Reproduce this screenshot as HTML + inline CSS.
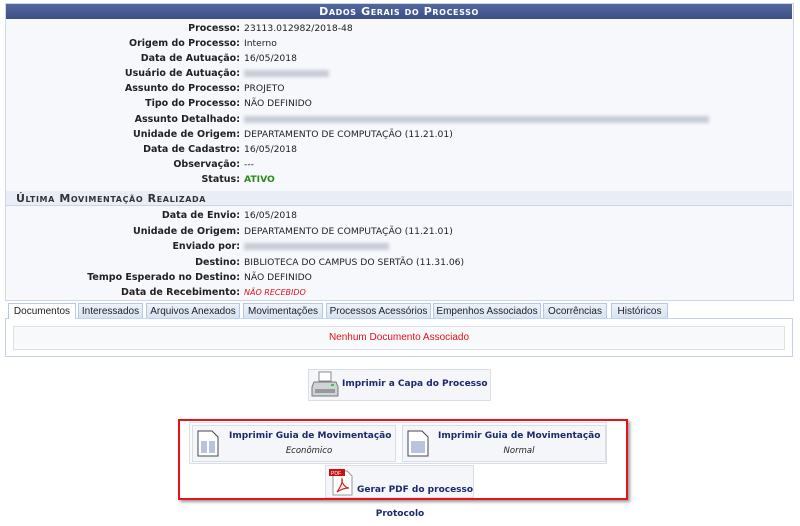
<!DOCTYPE html>
<html><head><meta charset="utf-8"><style>
body{margin:0;width:800px;height:526px;background:#fff;font-family:"DejaVu Sans","Liberation Sans",sans-serif;font-size:10px;color:#222;position:relative;overflow:hidden}
.a{position:absolute}
.box{left:5px;top:3px;width:787px;height:296px;background:#f7f8fc;border:1px solid #cfd6e4}
.hdr{left:6px;top:4px;width:786px;height:15px;background:linear-gradient(#5468a0,#3b4e86);color:#fff;font-weight:bold;font-size:11px;text-align:center;line-height:15px;font-variant:small-caps;letter-spacing:.6px}
.row{left:0;width:800px;height:15px;line-height:15px}
.l{position:absolute;right:560px;font-weight:bold;white-space:nowrap;font-size:9.5px}
.v{position:absolute;left:244px;white-space:nowrap;font-size:9.2px}
.blur{display:inline-block;height:7px;background:#c8ccd6;filter:blur(1.5px);vertical-align:middle}
.sec{left:6px;top:191px;width:786px;height:15px;background:#e9edf5;border-bottom:1px solid #cdd5e3;line-height:15px;font-weight:bold;font-size:11px;padding-left:10px;box-sizing:border-box;color:#333;letter-spacing:.6px;font-variant:small-caps}
.tab{position:absolute;top:303px;height:15px;background:linear-gradient(#eef3fb,#d6e2f5);border:1px solid #b7c8e6;border-bottom:none;font-family:"Liberation Sans",sans-serif;font-size:10px;line-height:15px;text-align:center;color:#222;box-sizing:border-box}
.btn{position:absolute;background:#f4f6fa;border:1px solid #d8dde6;box-sizing:border-box}
.bt{font-weight:bold;color:#1b2a6b;font-size:9px}
</style></head><body>
<div class="a box"></div>
<div class="a hdr">Dados Gerais do Processo</div>
<div class="a row" style="top:21px"><span class="l">Processo:</span><span class="v">23113.012982/2018-48</span></div>
<div class="a row" style="top:36px"><span class="l">Origem do Processo:</span><span class="v">Interno</span></div>
<div class="a row" style="top:51px"><span class="l">Data de Autuação:</span><span class="v">16/05/2018</span></div>
<div class="a row" style="top:66px"><span class="l">Usuário de Autuação:</span><span class="v"><span class="blur" style="width:85px"></span></span></div>
<div class="a row" style="top:81px"><span class="l">Assunto do Processo:</span><span class="v">PROJETO</span></div>
<div class="a row" style="top:96px"><span class="l">Tipo do Processo:</span><span class="v">NÃO DEFINIDO</span></div>
<div class="a row" style="top:112px"><span class="l">Assunto Detalhado:</span><span class="v"><span class="blur" style="width:465px"></span></span></div>
<div class="a row" style="top:127px"><span class="l">Unidade de Origem:</span><span class="v">DEPARTAMENTO DE COMPUTAÇÃO (11.21.01)</span></div>
<div class="a row" style="top:142px"><span class="l">Data de Cadastro:</span><span class="v">16/05/2018</span></div>
<div class="a row" style="top:157px"><span class="l">Observação:</span><span class="v">---</span></div>
<div class="a row" style="top:172px"><span class="l">Status:</span><span class="v" style="color:#2a8a1a;font-weight:bold">ATIVO</span></div>
<div class="a sec">Última Movimentação Realizada</div>
<div class="a row" style="top:208px"><span class="l">Data de Envio:</span><span class="v">16/05/2018</span></div>
<div class="a row" style="top:224px"><span class="l">Unidade de Origem:</span><span class="v">DEPARTAMENTO DE COMPUTAÇÃO (11.21.01)</span></div>
<div class="a row" style="top:239px"><span class="l">Enviado por:</span><span class="v"><span class="blur" style="width:145px"></span></span></div>
<div class="a row" style="top:255px"><span class="l">Destino:</span><span class="v">BIBLIOTECA DO CAMPUS DO SERTÃO (11.31.06)</span></div>
<div class="a row" style="top:270px"><span class="l">Tempo Esperado no Destino:</span><span class="v">NÃO DEFINIDO</span></div>
<div class="a row" style="top:285px"><span class="l">Data de Recebimento:</span><span class="v" style="color:#e0101a;font-style:italic;font-size:8px">NÃO RECEBIDO</span></div>

<div class="a" style="left:5px;top:318px;width:788px;height:39px;border:1px solid #c5d3ea;box-sizing:border-box;background:#fff"></div>
<div class="a" style="left:13px;top:326px;width:772px;height:24px;border:1px solid #dde2ea;background:#f8f9fb;box-sizing:border-box;text-align:center;line-height:22px;color:#e0101a;font-family:'Liberation Sans',sans-serif;font-size:10px">Nenhum Documento Associado</div>
<div class="tab" style="left:8px;width:68px;background:#fff;height:16px">Documentos</div>
<div class="tab" style="left:78px;width:65px">Interessados</div>
<div class="tab" style="left:146px;width:94px">Arquivos Anexados</div>
<div class="tab" style="left:243px;width:80px">Movimentações</div>
<div class="tab" style="left:326px;width:105px">Processos Acessórios</div>
<div class="tab" style="left:433px;width:108px">Empenhos Associados</div>
<div class="tab" style="left:543px;width:64px">Ocorrências</div>
<div class="tab" style="left:611px;width:57px">Históricos</div>

<div class="btn" style="left:308px;top:369px;width:183px;height:32px"></div>
<svg class="a" style="left:311px;top:371px" width="28" height="28"><rect x="8" y="1" width="12" height="9" fill="#fff" stroke="#888"/><path d="M3 11h22l2 5v9H1v-9z" fill="#cfd2d6" stroke="#777"/><rect x="20" y="13" width="3" height="2" fill="#3c3"/><rect x="4" y="18" width="20" height="4" fill="#999"/></svg>
<div class="a bt" style="left:342px;top:379px">Imprimir a Capa do Processo</div>

<div class="a" style="left:178px;top:419px;width:450px;height:81px;border:2px solid #e8121c;box-sizing:border-box;box-shadow:2px 2px 3px #999"></div>
<div class="btn" style="left:189px;top:422px;width:418px;height:42px;background:#fafbfc"></div>
<div class="btn" style="left:192px;top:425px;width:204px;height:37px"></div>
<div class="btn" style="left:402px;top:425px;width:204px;height:37px"></div>
<svg class="a" style="left:197px;top:430px" width="22" height="27"><path d="M1 1h14l6 6v19H1z" fill="#fff" stroke="#445"/><rect x="4" y="11" width="6" height="12" fill="#b9c3e0"/><rect x="12" y="11" width="6" height="12" fill="#b9c3e0"/></svg>
<svg class="a" style="left:407px;top:430px" width="22" height="27"><path d="M1 1h14l6 6v19H1z" fill="#fff" stroke="#445"/><rect x="4" y="11" width="14" height="12" fill="#b9c3e0"/></svg>
<div class="a bt" style="left:229px;top:431px">Imprimir Guia de Movimentação</div>
<div class="a" style="left:192px;top:446px;width:204px;text-align:center;font-style:italic;font-size:8.5px;padding-left:30px;box-sizing:border-box">Econômico</div>
<div class="a bt" style="left:438px;top:431px">Imprimir Guia de Movimentação</div>
<div class="a" style="left:402px;top:446px;width:204px;text-align:center;font-style:italic;font-size:8.5px;padding-left:30px;box-sizing:border-box">Normal</div>
<div class="btn" style="left:325px;top:465px;width:149px;height:33px"></div>
<svg class="a" style="left:328px;top:468px" width="26" height="28"><path d="M5 3h14l5 5v19H5z" fill="#fff" stroke="#999"/><rect x="1" y="1" width="16" height="7" fill="#c11"/><text x="3" y="7" font-size="5" fill="#fff" font-family="Liberation Sans">PDF</text><path d="M9 24c4-6 6-10 5-13c-1 3 3 9 7 9c-5 0-9 2-12 4z" fill="none" stroke="#d22" stroke-width="1.2"/></svg>
<div class="a bt" style="left:357px;top:485px">Gerar PDF do processo</div>
<div class="a bt" style="left:0;width:800px;text-align:center;top:509px">Protocolo</div>
</body></html>
